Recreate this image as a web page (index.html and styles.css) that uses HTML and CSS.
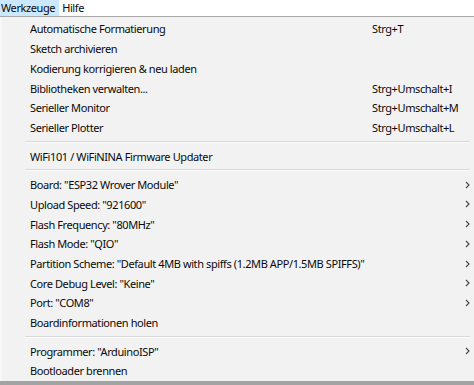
FILE: index.html
```html
<!DOCTYPE html>
<html lang="de">
  <head>
    <meta charset="utf-8" />
    <title>Werkzeuge</title>
    <link rel="stylesheet" href="styles.css">
  </head>
  <body>
    <div class="menubar">
      <span class="menubar-item active">Werkzeuge</span>
      <span class="menubar-item">Hilfe</span>
    </div>

    <div class="popup">
      <div class="item"><span class="label">Automatische Formatierung</span><span class="shortcut">Strg+T</span></div>
      <div class="item"><span class="label">Sketch archivieren</span></div>
      <div class="item"><span class="label">Kodierung korrigieren &amp; neu laden</span></div>
      <div class="item"><span class="label">Bibliotheken verwalten...</span><span class="shortcut">Strg+Umschalt+I</span></div>
      <div class="item"><span class="label">Serieller Monitor</span><span class="shortcut">Strg+Umschalt+M</span></div>
      <div class="item"><span class="label">Serieller Plotter</span><span class="shortcut">Strg+Umschalt+L</span></div>
      <div class="sep"></div>
      <div class="item"><span class="label">WiFi101 / WiFiNINA Firmware Updater</span></div>
      <div class="sep"></div>
      <div class="item sub"><span class="label">Board: "ESP32 Wrover Module"</span><svg class="arrow" width="5" height="8" viewBox="0 0 5 8"><path d="M1 1l3 3-3 3" fill="none" stroke="#444" stroke-width="1.1"/></svg></div>
      <div class="item sub"><span class="label">Upload Speed: "921600"</span><svg class="arrow" width="5" height="8" viewBox="0 0 5 8"><path d="M1 1l3 3-3 3" fill="none" stroke="#444" stroke-width="1.1"/></svg></div>
      <div class="item sub"><span class="label">Flash Frequency: "80MHz"</span><svg class="arrow" width="5" height="8" viewBox="0 0 5 8"><path d="M1 1l3 3-3 3" fill="none" stroke="#444" stroke-width="1.1"/></svg></div>
      <div class="item sub"><span class="label">Flash Mode: "QIO"</span><svg class="arrow" width="5" height="8" viewBox="0 0 5 8"><path d="M1 1l3 3-3 3" fill="none" stroke="#444" stroke-width="1.1"/></svg></div>
      <div class="item sub"><span class="label">Partition Scheme: "Default 4MB with spiffs (1.2MB APP/1.5MB SPIFFS)"</span><svg class="arrow" width="5" height="8" viewBox="0 0 5 8"><path d="M1 1l3 3-3 3" fill="none" stroke="#444" stroke-width="1.1"/></svg></div>
      <div class="item sub"><span class="label">Core Debug Level: "Keine"</span><svg class="arrow" width="5" height="8" viewBox="0 0 5 8"><path d="M1 1l3 3-3 3" fill="none" stroke="#444" stroke-width="1.1"/></svg></div>
      <div class="item sub"><span class="label">Port: "COM8"</span><svg class="arrow" width="5" height="8" viewBox="0 0 5 8"><path d="M1 1l3 3-3 3" fill="none" stroke="#444" stroke-width="1.1"/></svg></div>
      <div class="item"><span class="label">Boardinformationen holen</span></div>
      <div class="sep"></div>
      <div class="item sub"><span class="label">Programmer: "ArduinoISP"</span><svg class="arrow" width="5" height="8" viewBox="0 0 5 8"><path d="M1 1l3 3-3 3" fill="none" stroke="#444" stroke-width="1.1"/></svg></div>
      <div class="item"><span class="label">Bootloader brennen</span></div>
    </div>
  </body>
</html>
```

FILE: styles.css
```css
body {
  margin: 0;
  overflow: hidden;
  background-color: #a3a3a3;
  font-family: "Noto Sans", "Open Sans", sans-serif;
  font-size: 11px;
  letter-spacing: -0.4px;
  color: #0a0a0a;
}
.menubar {
  display: flex;
  height: 16px;
  background-color: #fff;
  border-bottom: 1px solid #a8a8a8;
}
.menubar-item {
  padding: 0 3px 0 1px;
  line-height: 16px;
}
.menubar-item.active {
  background-color: #cce8ff;
  padding-right: 4px;
  margin-right: 2px;
}
.popup {
  background-color: #f2f2f2;
  padding: 2.15px 0 0 0;
  height: 361.9px;
  border-left: 2px solid #f8f8f8;
}
.item {
  display: flex;
  align-items: center;
  height: 19.7px;
  padding-left: 28px;
  padding-right: 4px;
}
.label {
  flex: 1;
  white-space: nowrap;
}
.shortcut {
  width: 98px;
  white-space: nowrap;
}
.arrow {
  display: block;
}
.sep {
  height: 9px;
  display: flex;
  align-items: center;
  margin: 0 4px 0 23px;
}
.sep::before {
  content: "";
  flex: 1;
  height: 1px;
  background-color: #d9d9d9;
  border-bottom: 1px solid #fbfbfb;
}
```
